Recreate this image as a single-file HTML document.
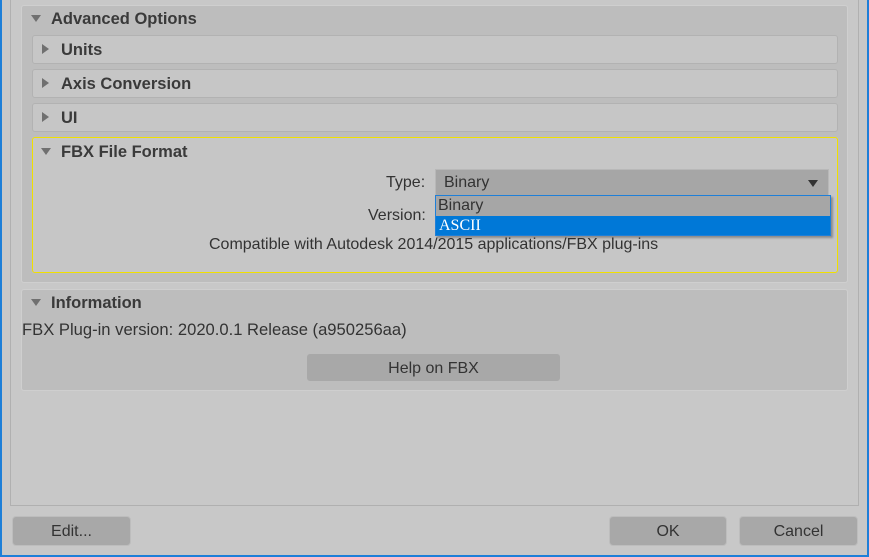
<!DOCTYPE html><html><head><style>
body{margin:0;width:869px;height:557px;background:#c8c8c8;font-family:"Liberation Sans",sans-serif;color:#333;position:relative;overflow:hidden;font-size:15px}
div{position:absolute;box-sizing:border-box}
.t{font-family:"Liberation Sans",sans-serif;font-size:16px}
.b{font-family:"Liberation Sans",sans-serif;font-weight:bold;font-size:16.5px;color:#3a3a3a}
.row{left:32px;width:806px;height:29px;background:#c6c6c6;border:1px solid #b2b2b2;border-radius:3px}
.row span{position:absolute;left:28px;top:5px}
.tr{position:absolute;left:9px;top:8px;width:0;height:0;border-left:7px solid #707070;border-top:5px solid transparent;border-bottom:5px solid transparent}
.td{position:absolute;width:0;height:0;border-top:7px solid #707070;border-left:5px solid transparent;border-right:5px solid transparent}
.btn{font-family:"Liberation Sans",sans-serif;background:#a8a8a8;border:1px solid #bdbdbd;border-radius:4px;text-align:center;line-height:30px;font-size:16px;color:#333}
</style></head><body>
<div style="left:0;top:0;width:2px;height:557px;background:#1e7fd8"></div>
<div style="right:0;top:0;width:2px;height:557px;background:#1e7fd8"></div>
<div style="left:0;bottom:0;width:869px;height:2px;background:#1e7fd8"></div>
<div style="left:10px;top:-2px;width:849px;height:508px;border:1px solid #b0b0b0"></div>
<div style="left:21px;top:5px;width:827px;height:278px;background:#bdbdbd;border:1px solid #cfcfcf;border-radius:3px"></div>
<div class="td" style="left:31px;top:15px"></div>
<div class="b" style="left:51px;top:10px">Advanced Options</div>
<div class="row" style="top:35px"><i class="tr"></i><span class="b">Units</span></div>
<div class="row" style="top:69px"><i class="tr"></i><span class="b">Axis Conversion</span></div>
<div class="row" style="top:103px"><i class="tr"></i><span class="b">UI</span></div>
<div class="row" style="top:137px;height:136px;border:1px solid #f0e000"><i class="td" style="left:8px;top:10px"></i><span class="b">FBX File Format</span></div>
<div class="t" style="left:386px;top:174px">Type:</div>
<div style="left:435px;top:169px;width:394px;height:27px;background:#a6a6a6;border:1px solid #b8b8b8"><span class="t" style="position:absolute;left:8px;top:4px">Binary</span><i class="td" style="left:372px;top:10px;border-top-color:#333"></i></div>
<div class="t" style="left:368px;top:207px">Version:</div>
<div class="t" style="left:209px;top:236px">Compatible with Autodesk 2014/2015 applications/FBX plug-ins</div>
<div style="left:435px;top:195px;width:396px;height:41px;border:1px solid #1e7fd8;box-shadow:2px 2px 2px rgba(0,0,0,.3);background:#0078d7"><div class="t" style="left:0;top:0;width:394px;height:20px;background:#a6a6a6;padding-left:2px;line-height:20px;color:#333">Binary</div><div style="left:0;top:20px;width:394px;height:19px;padding-left:3px;line-height:19px;color:#fff;font-family:'Liberation Serif',serif;font-size:16px">ASCII</div></div>
<div style="left:21px;top:289px;width:827px;height:102px;background:#bdbdbd;border:1px solid #cfcfcf;border-radius:3px"></div>
<div class="td" style="left:31px;top:299px"></div>
<div class="b" style="left:51px;top:294px">Information</div>
<div class="t" style="left:22px;top:320px;font-size:16.6px">FBX Plug-in version: 2020.0.1 Release (a950256aa)</div>
<div class="btn" style="left:306px;top:353px;width:255px;height:29px">Help on FBX</div>
<div class="btn" style="left:12px;top:516px;width:119px;height:30px">Edit...</div>
<div class="btn" style="left:609px;top:516px;width:118px;height:30px">OK</div>
<div class="btn" style="left:739px;top:516px;width:119px;height:30px">Cancel</div>
</body></html>
